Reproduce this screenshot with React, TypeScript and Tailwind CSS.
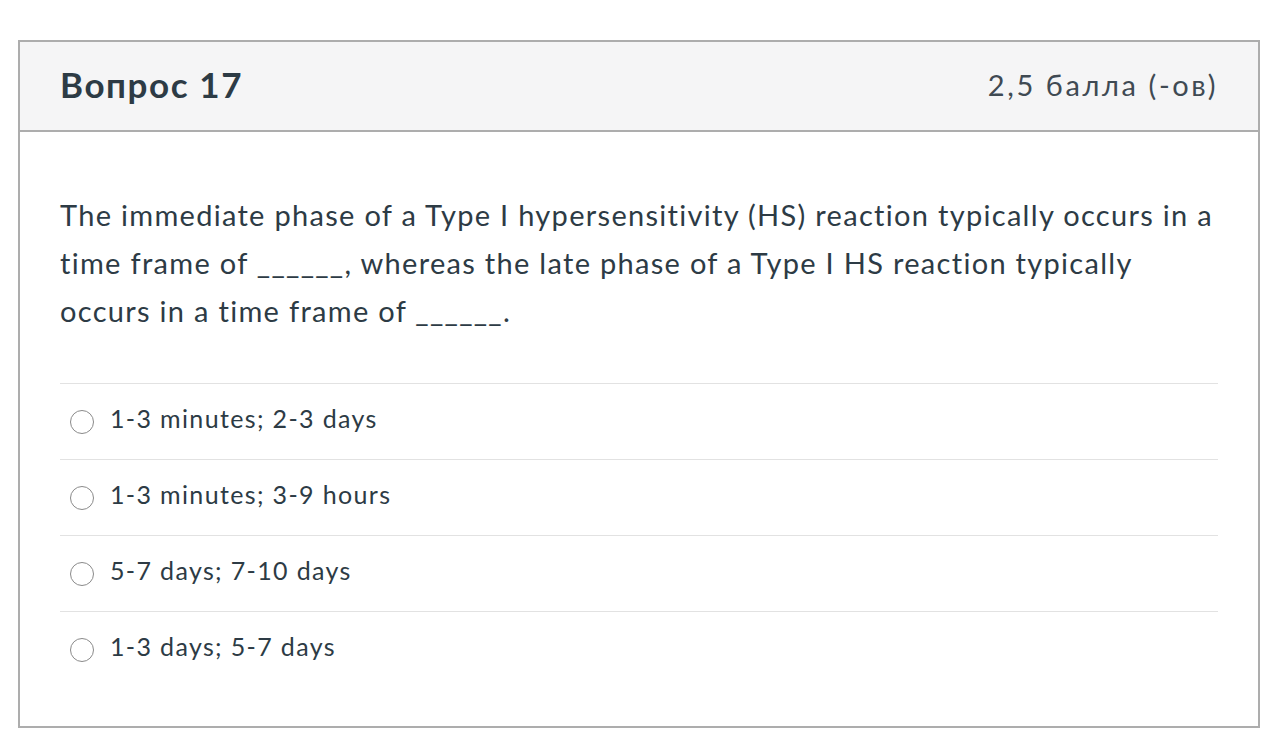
const options = [
  "1-3 minutes; 2-3 days",
  "1-3 minutes; 3-9 hours",
  "5-7 days; 7-10 days",
  "1-3 days; 5-7 days",
];

export default function App() {
  return (
    <div
      className="min-h-[738px] bg-white pt-[40px] pl-[18px]"
      style={{ fontFamily: "Lato, 'Noto Sans', sans-serif" }}
    >
      <div className="w-[1242px] border-2 border-[#adadad] text-[#2d3b45]">
        <div className="flex h-[90px] items-center justify-between border-b-2 border-[#adadad] bg-[#f5f5f6] px-[40px]">
          <h2 className="mb-[3px] text-[35px] font-bold leading-none tracking-[1.6px]">Вопрос 17</h2>
          <div className="mb-[3px] text-[29px] leading-none tracking-[2.6px] text-[#3f4a53]">2,5 балла (-ов)</div>
        </div>
        <div className="px-[40px] pt-[59px] pb-[39px]">
          <p className="text-[29px] leading-[48px] tracking-[1.3px] text-[#2d3b45]">
            The immediate phase of a Type I hypersensitivity (HS) reaction typically occurs in a
            time frame of ______, whereas the late phase of a Type I HS reaction typically occurs
            in a time frame of ______.
          </p>
          <div className="mt-[48px]">
            {options.map((o) => (
              <label
                key={o}
                className="flex h-[76px] items-center gap-[16px] border-t border-[#e2e2e2] pl-[10px]"
              >
                <span className="h-[24px] w-[24px] shrink-0 rounded-full border-[1.5px] border-[#8a8a8a] bg-white" />
                <span className="mb-[7px] text-[25px] leading-none tracking-[1.35px] text-[#2d3b45]">{o}</span>
              </label>
            ))}
          </div>
        </div>
      </div>
    </div>
  );
}
